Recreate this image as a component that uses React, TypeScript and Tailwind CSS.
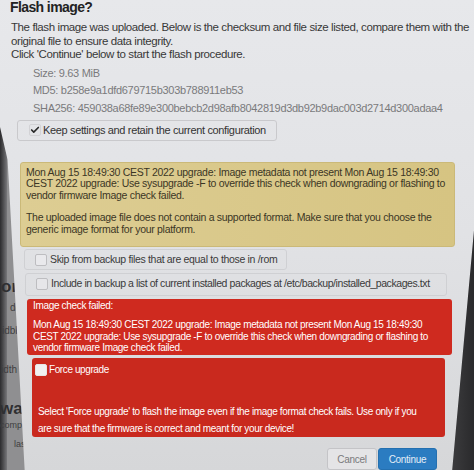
import { Check } from "lucide-react";

const FONT = "font-['Liberation_Sans',Arial,sans-serif]";

function Box({ className, checked }: { className?: string; checked?: boolean }) {
  return (
    <span
      className={
        "flex h-[12px] w-[12px] shrink-0 items-center justify-center rounded-[2px] border " +
        (className ?? "")
      }
    >
      {checked && <Check className="h-[10px] w-[10px]" strokeWidth={4} />}
    </span>
  );
}

export default function App() {
  return (
    <div className={"relative h-[470px] w-[474px] overflow-hidden bg-[#8f8f91] " + FONT}>
      {/* page behind the modal overlay */}
      <div className="absolute left-0 top-0 h-full w-[7px] bg-gradient-to-r from-[#2c2c2e] to-[#77777a]" />
      <div className="absolute right-0 top-0 h-full w-[40px] bg-gradient-to-r from-[#4a4a4c] to-[#2a2a2c]" />
      <div className="absolute left-[1px] top-[278px] text-[17px] font-bold leading-none text-[#2f2f31]">or</div>
      <div className="absolute left-[10px] top-[303px] text-[10px] leading-none text-[#3e3e40]">do</div>
      <div className="absolute left-[2px] top-[326px] text-[10px] leading-none text-[#3e3e40]">idbl</div>
      <div className="absolute left-[1px] top-[365px] text-[10px] leading-none text-[#3e3e40]">idth</div>
      <div className="absolute left-0 top-[400px] text-[17px] font-bold leading-none text-[#2f2f31]">wa</div>
      <div className="absolute left-0 top-[421px] text-[9px] leading-none text-[#3e3e40]">comp</div>
      <div className="absolute left-[14px] top-[440px] text-[9px] leading-none text-[#3e3e40]">las</div>

      {/* modal */}
      <div className="relative flex h-full flex-col bg-gradient-to-b from-[#e7e8eb] via-[#e1e2e5] to-[#d6d7d9] [clip-path:polygon(0_0,100%_0,100%_49%,95.4%_100%,5.2%_100%,1.6%_34%,0_27%)]">
        <h3 className="-mt-[1px] ml-[10px] text-[14px] font-bold leading-[16px] tracking-[-0.6px] text-[#222]">
          Flash image?
        </h3>

        <div className="ml-[11px] mt-[6px] whitespace-nowrap text-[11.5px] leading-[13.5px] tracking-[-0.4px] text-[#383838]">
          <p>The flash image was uploaded. Below is the checksum and file size listed, compare them with the</p>
          <p>original file to ensure data integrity.</p>
          <p>Click 'Continue' below to start the flash procedure.</p>
        </div>

        <ul className="ml-[33px] mt-[3px] whitespace-nowrap text-[11px] leading-[17.5px] tracking-[-0.3px] text-[#7a7a7c]">
          <li>Size: 9.63 MiB</li>
          <li>MD5: b258e9a1dfd679715b303b788911eb53</li>
          <li>SHA256: 459038a68fe89e300bebcb2d98afb8042819d3db92b9dac003d2714d300adaa4</li>
        </ul>

        <label className="ml-[17px] mt-[3px] flex h-[22px] w-[260px] items-center gap-[2px] rounded-[3px] border border-[#c9c9cc] pl-[11px] text-[11px] tracking-[-0.35px] text-[#333]">
          <Box className="border-[#d2d2d5] text-[#2a2a2a]" checked />
          <span className="whitespace-nowrap">Keep settings and retain the current configuration</span>
        </label>

        <div className="ml-[20px] mt-[21px] w-[435px] rounded-[3px] border border-[#cbb978] bg-gradient-to-r from-[#ddcd93] to-[#d6c482] px-[5px] pb-[11px] pt-[4px] text-[10.5px] leading-[11.5px] tracking-[-0.3px] text-[#3b3625]">
          <p className="whitespace-nowrap">Mon Aug 15 18:49:30 CEST 2022 upgrade: Image metadata not present Mon Aug 15 18:49:30</p>
          <p className="whitespace-nowrap">CEST 2022 upgrade: Use sysupgrade -F to override this check when downgrading or flashing to</p>
          <p className="whitespace-nowrap">vendor firmware Image check failed.</p>
          <p className="mt-[11px] whitespace-nowrap">The uploaded image file does not contain a supported format. Make sure that you choose the</p>
          <p className="whitespace-nowrap">generic image format for your platform.</p>
        </div>

        <label className="ml-[24px] mt-[2px] flex h-[22px] w-[263px] items-center gap-[3px] rounded-[3px] border border-[#cfd0d3] pl-[10px] text-[10.5px] tracking-[-0.33px] text-[#3a3a3a]">
          <Box className="border-[#bdbdc0] bg-[#e9e9ec]" />
          <span className="whitespace-nowrap">Skip from backup files that are equal to those in /rom</span>
        </label>

        <label className="ml-[25px] mt-[3px] flex h-[24px] w-[422px] items-center gap-[3px] rounded-[3px] border border-[#cfd0d3] pl-[10px] text-[10.5px] tracking-[-0.42px] text-[#3a3a3a]">
          <Box className="border-[#bdbdc0] bg-[#e6e6e9]" />
          <span className="whitespace-nowrap">Include in backup a list of current installed packages at /etc/backup/installed_packages.txt</span>
        </label>

        <div className="ml-[27px] mt-[3px] h-[60px] w-[425px] rounded-[3px] bg-[#cf2a1f] px-[6px] pt-[1px] text-[10px] leading-[11.5px] tracking-[-0.33px] text-white">
          <p className="whitespace-nowrap">Image check failed:</p>
          <p className="mt-[8px] whitespace-nowrap">Mon Aug 15 18:49:30 CEST 2022 upgrade: Image metadata not present Mon Aug 15 18:49:30</p>
          <p className="whitespace-nowrap">CEST 2022 upgrade: Use sysupgrade -F to override this check when downgrading or flashing to</p>
          <p className="whitespace-nowrap">vendor firmware Image check failed.</p>
        </div>

        <div className="ml-[32px] mt-[3px] flex h-[81px] w-[413px] flex-col rounded-[3px] bg-[#c9291e] px-[3px] pt-[6px] text-[10px] text-white">
          <label className="flex items-center gap-[2px] leading-[12px]">
            <Box className="border-[#e6e6e6] bg-[#f1f1f1]" />
            <span className="tracking-[-0.4px]">Force upgrade</span>
          </label>
          <div className="ml-[3px] mt-[27px] whitespace-nowrap leading-[17px] tracking-[-0.35px]">
            <p>Select 'Force upgrade' to flash the image even if the image format check fails. Use only if you</p>
            <p>are sure that the firmware is correct and meant for your device!</p>
          </div>
        </div>

        <div className="ml-[327px] mt-[11px] flex gap-[1px] text-[10px] tracking-[-0.3px]">
          <button className="h-[22px] w-[50px] rounded-[3px] border border-[#c4c4c7] bg-[#e4e4e6] text-[#7a7a7c]">
            Cancel
          </button>
          <button className="h-[22px] w-[59px] rounded-[3px] border border-[#2470b0] bg-[#2b7cc1] text-[#e3edf7]">
            Continue
          </button>
        </div>
      </div>
    </div>
  );
}
